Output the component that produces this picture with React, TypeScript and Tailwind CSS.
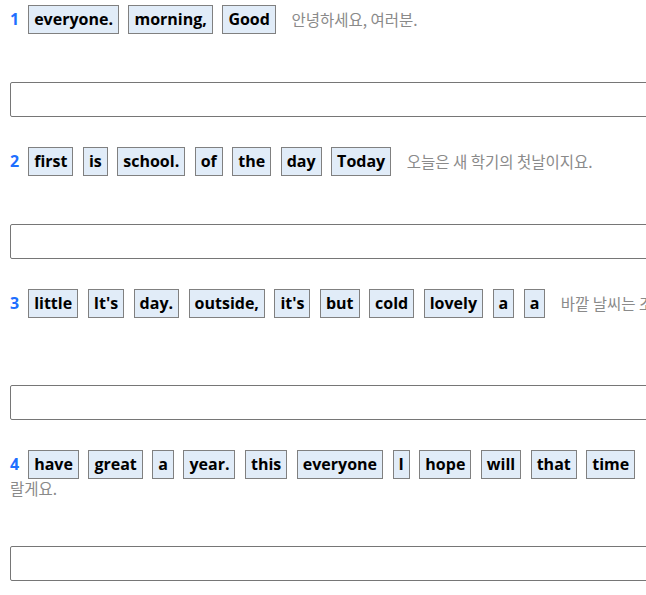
const rows = [
  {
    n: 1,
    words: ['everyone.', 'morning,', 'Good'],
    ko: '안녕하세요, 여러분.',
    rest: '',
    tall: false,
  },
  {
    n: 2,
    words: ['first', 'is', 'school.', 'of', 'the', 'day', 'Today'],
    ko: '오늘은 새 학기의 첫날이지요.',
    rest: '',
    tall: false,
  },
  {
    n: 3,
    words: ['little', "It's", 'day.', 'outside,', "it's", 'but', 'cold', 'lovely', 'a', 'a'],
    ko: '바깥 날씨는 조금 춥지만 멋진 날이에요.',
    rest: '',
    tall: true,
  },
  {
    n: 4,
    words: ['have', 'great', 'a', 'year.', 'this', 'everyone', 'I', 'hope', 'will', 'that', 'time'],
    ko: '올해 모두가 멋진 시간을 보내길 바',
    rest: '랄게요.',
    tall: true,
  },
]

function Chip({ word }: { word: string }) {
  return (
    <span className="mr-[9.5px] inline-block border border-[#808080] bg-[#e1ecf8] px-[5px] py-[1px] align-middle text-[16px] font-bold leading-[25px] text-black">
      {word}
    </span>
  )
}

export default function App() {
  return (
    <div className="w-[646px] overflow-hidden bg-white font-['Open_Sans','Noto_Sans_CJK_KR',sans-serif]">
      <div className="w-[1000px] px-[10px] pt-[5px]">
        {rows.map((row) => (
          <div key={row.n} className="mb-[30px]">
            <div className={row.tall ? 'min-h-[58px] text-[15.5px] leading-[19px]' : 'min-h-[39px] text-[15.5px] leading-[19px]'}>
              <span className="mr-[9px] inline-block align-middle text-[16px] font-bold leading-[25px] text-[#1e6fff]">
                {row.n}
              </span>
              {row.words.map((w, i) => (
                <Chip key={i} word={w} />
              ))}
              <span className="ml-[6px] whitespace-nowrap align-middle font-['Noto_Sans_CJK_KR',sans-serif] text-[#8a8a8a]">
                {row.ko}
              </span>
              {row.rest && (
                <>
                  <br />
                  <span className="font-['Noto_Sans_CJK_KR',sans-serif] text-[#8a8a8a]">{row.rest}</span>
                </>
              )}
            </div>
            <input
              type="text"
              className="mt-[38px] block h-[35px] w-full rounded-[2px] border border-[#767676] bg-white px-2 outline-none"
            />
          </div>
        ))}
      </div>
    </div>
  )
}
